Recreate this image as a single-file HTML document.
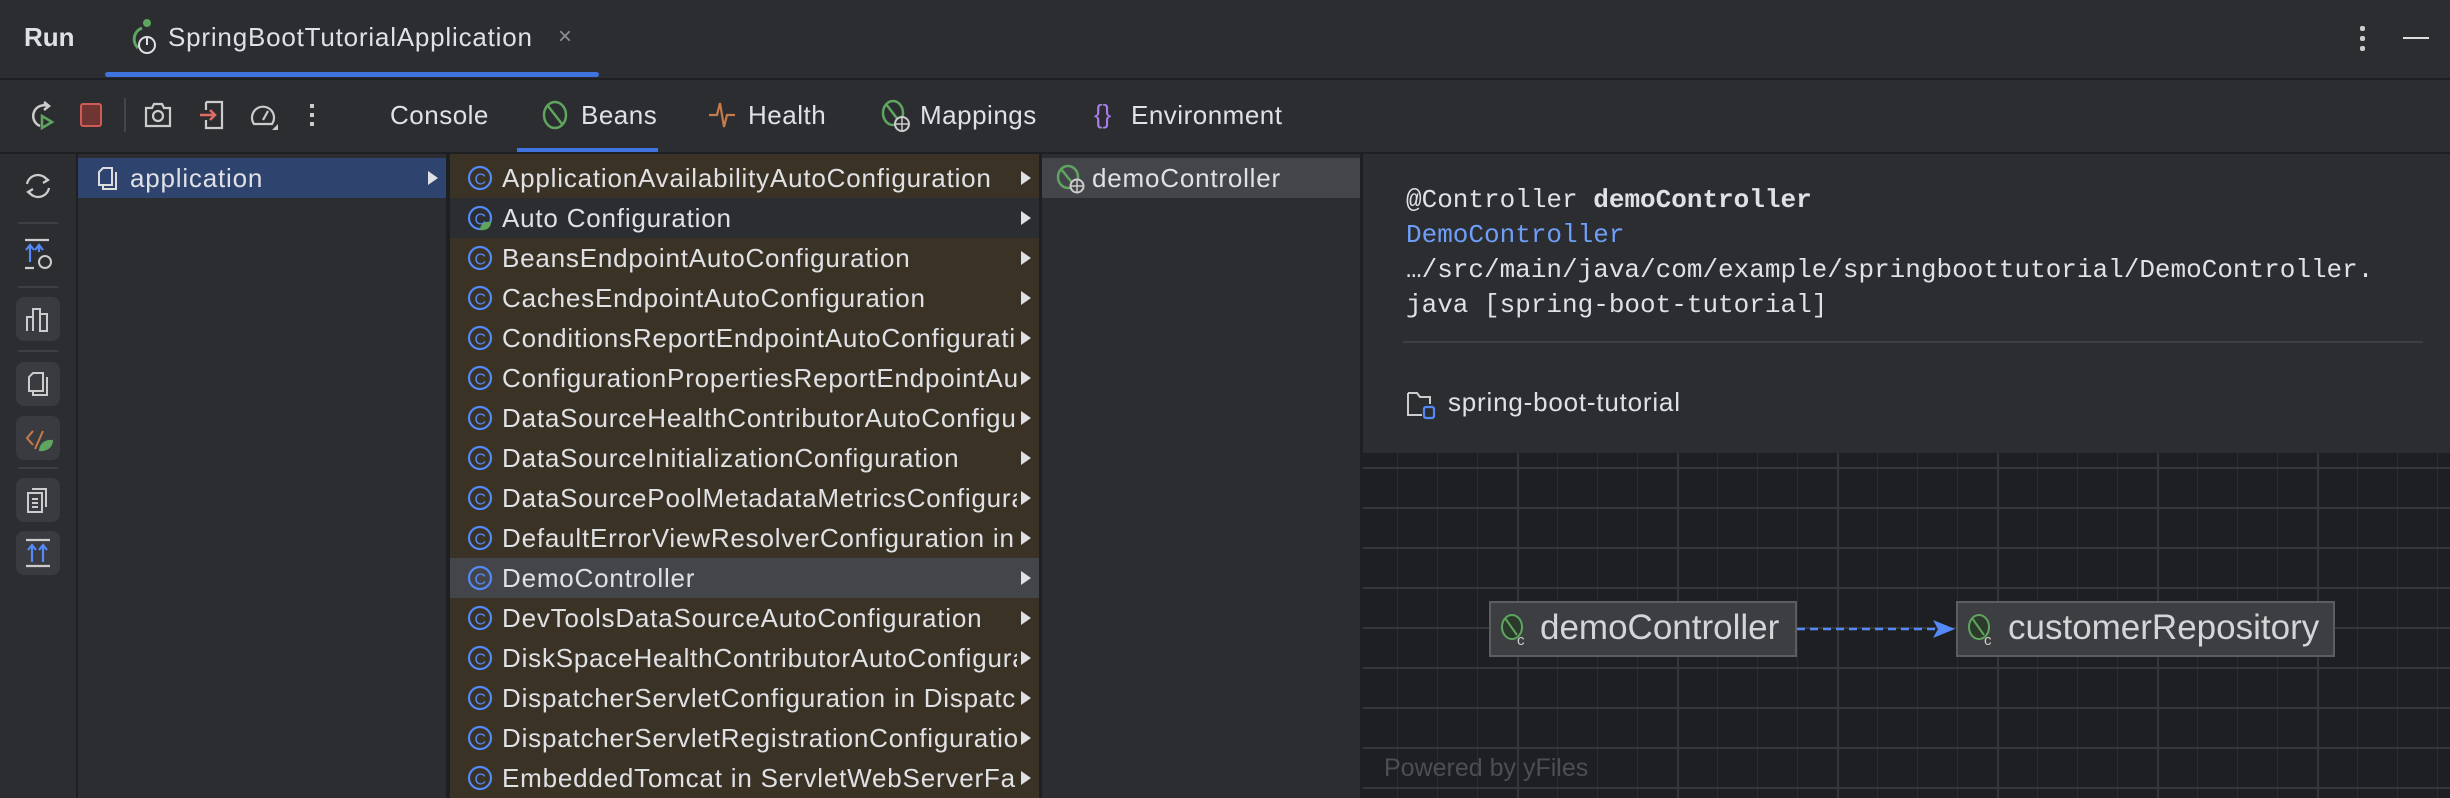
<!DOCTYPE html>
<html><head><meta charset="utf-8">
<style>
*{margin:0;padding:0;box-sizing:border-box}
body{width:2450px;height:798px;background:#2b2d30;font-family:"Liberation Sans",sans-serif;color:#dfe1e5;position:relative;overflow:hidden}
.a{position:absolute}
.t{position:absolute;white-space:nowrap}
.row{position:absolute;height:40px;left:0;right:0}
.row .lbl{position:absolute;left:52px;top:0;line-height:40px;font-size:26px;letter-spacing:0.8px;white-space:nowrap;overflow:hidden;width:515px}
.row .ic{position:absolute;left:17px;top:6px}
.row .ar{position:absolute;right:8px;top:13px;width:0;height:0;border-left:10px solid #dfe1e5;border-top:7px solid transparent;border-bottom:7px solid transparent}
.sb{position:absolute;left:16px;width:44px;height:44px;border-radius:8px;background:#393b40}
.sep{position:absolute;left:18px;width:40px;height:2px;background:#3c3f43}
.tb{font-size:26px;letter-spacing:0.5px}
</style></head><body>

<!-- header -->
<div class="t" style="left:24px;top:22px;font-size:26px;font-weight:bold">Run</div>
<svg class="a" style="left:128px;top:18px" width="36" height="38" viewBox="0 0 36 38"><circle cx="19" cy="5" r="4" fill="#5fa55f"/><path d="M14 10 A12 12 0 0 0 10 30" stroke="#5fa55f" stroke-width="3" fill="none"/><circle cx="19" cy="27" r="8" stroke="#dfe1e5" stroke-width="2" fill="#2b2d30"/><path d="M19 20 V27" stroke="#dfe1e5" stroke-width="2"/></svg>
<div class="t" style="left:168px;top:22px;font-size:26px;letter-spacing:0.8px">SpringBootTutorialApplication</div>
<div class="t" style="left:558px;top:23px;font-size:24px;color:#8c8f94">×</div>
<div class="a" style="left:105px;top:72px;width:494px;height:5px;background:#3f74e0;border-radius:3px"></div>
<div class="a" style="left:2360px;top:26px;width:5px;height:5px;background:#ccc;border-radius:2px"></div>
<div class="a" style="left:2360px;top:36px;width:5px;height:5px;background:#ccc;border-radius:2px"></div>
<div class="a" style="left:2360px;top:46px;width:5px;height:5px;background:#ccc;border-radius:2px"></div>
<div class="a" style="left:2403px;top:37px;width:26px;height:2px;background:#ddd"></div>
<div class="a" style="left:0;top:78px;width:2450px;height:2px;background:#1e1f22"></div>

<!-- toolbar -->
<svg class="a" style="left:28px;top:100px" width="28" height="30" viewBox="0 0 28 30"><path d="M20 6 A10 10 0 1 0 12 26" stroke="#ccc" stroke-width="2.5" fill="none"/><path d="M16 2 L21 6 L16 10" stroke="#ccc" stroke-width="2.5" fill="none"/><path d="M14 16 L24 22 L14 28Z" stroke="#5fa55f" stroke-width="2.5" fill="none"/></svg>
<div class="a" style="left:80px;top:103px;width:22px;height:24px;background:#6e3532;border:2px solid #d15a55;border-radius:3px"></div>
<div class="a" style="left:124px;top:98px;width:2px;height:34px;background:#43454a"></div>
<svg class="a" style="left:143px;top:102px" width="30" height="26" viewBox="0 0 30 26"><path d="M3 6 H9 L11 2 H19 L21 6 H27 V24 H3Z" stroke="#ccc" stroke-width="2.2" fill="none"/><circle cx="15" cy="14" r="5" stroke="#ccc" stroke-width="2.2" fill="none"/></svg>
<svg class="a" style="left:198px;top:100px" width="28" height="30" viewBox="0 0 28 30"><path d="M8 2 H24 V28 H8 V20 M8 10 V2" stroke="#ccc" stroke-width="2.2" fill="none"/><path d="M2 15 H17 M12 10 L17 15 L12 20" stroke="#e06c66" stroke-width="2.5" fill="none"/></svg>
<svg class="a" style="left:248px;top:100px" width="32" height="32" viewBox="0 0 32 32"><path d="M6 24 A11 11 0 1 1 24 24 Z" stroke="#ccc" stroke-width="2.2" fill="none"/><path d="M15 20 L20 11" stroke="#ccc" stroke-width="2.2"/><path d="M24 30 L30 30 L30 24Z" fill="#ccc"/></svg>
<div class="a" style="left:310px;top:104px;width:4px;height:4px;background:#ccc"></div>
<div class="a" style="left:310px;top:113px;width:4px;height:4px;background:#ccc"></div>
<div class="a" style="left:310px;top:122px;width:4px;height:4px;background:#ccc"></div>

<div class="t tb" style="left:390px;top:100px">Console</div>
<svg class="a" style="left:541px;top:100px" width="28" height="30" viewBox="0 0 28 30"><ellipse cx="14" cy="15" rx="11" ry="13" stroke="#5fa55f" stroke-width="2.5" fill="none"/><path d="M7 6 L21 24" stroke="#5fa55f" stroke-width="2.5"/></svg>
<div class="t tb" style="left:581px;top:100px">Beans</div>
<div class="a" style="left:517px;top:148px;width:141px;height:5px;background:#3f74e0"></div>
<svg class="a" style="left:708px;top:100px" width="28" height="30" viewBox="0 0 28 30"><path d="M1 15 H9 L12 3 L16 27 L19 15 H27" stroke="#c77b4a" stroke-width="2.2" fill="none"/></svg>
<div class="t tb" style="left:748px;top:100px">Health</div>
<svg class="a" style="left:880px;top:99px" width="32" height="34" viewBox="0 0 32 34"><ellipse cx="13" cy="14" rx="10" ry="12" stroke="#5fa55f" stroke-width="2.5" fill="none"/><path d="M6 5 L19 22" stroke="#5fa55f" stroke-width="2.5"/><circle cx="22" cy="25" r="7" fill="#2b2d30" stroke="#ccc" stroke-width="2"/><path d="M15 25 H29 M22 18 V32" stroke="#ccc" stroke-width="1.5"/></svg>
<div class="t tb" style="left:920px;top:100px">Mappings</div>
<div class="t" style="left:1094px;top:99px;font-size:26px;color:#a77eea">{}</div>
<div class="t tb" style="left:1131px;top:100px">Environment</div>
<div class="a" style="left:0;top:152px;width:2450px;height:2px;background:#1e1f22"></div>

<!-- sidebar -->
<div class="a" style="left:76px;top:154px;width:2px;height:644px;background:#1e1f22"></div>
<svg class="a" style="left:22px;top:170px" width="32" height="32" viewBox="0 0 32 32"><path d="M5 14 A11 11 0 0 1 25 10 M27 18 A11 11 0 0 1 7 22" stroke="#ccc" stroke-width="2.2" fill="none"/><path d="M21 6 L26 10 L21 13 M11 19 L6 22 L11 26" stroke="#ccc" stroke-width="2.2" fill="none"/></svg>
<div class="sep" style="top:222px"></div>
<svg class="a" style="left:22px;top:238px" width="32" height="32" viewBox="0 0 32 32"><path d="M3 2 H27 M3 30 H12" stroke="#ccc" stroke-width="2.2"/><path d="M8 24 V8 M4 12 L8 7 L12 12 M17 14 V8 M13 12 L17 7 L21 12" stroke="#548af7" stroke-width="2.2" fill="none"/><circle cx="23" cy="24" r="6" stroke="#ccc" stroke-width="2" fill="none"/></svg>
<div class="sep" style="top:286px"></div>
<div class="sb" style="top:297px"></div>
<svg class="a" style="left:24px;top:305px" width="28" height="28" viewBox="0 0 28 28"><path d="M3 26 V12 H9 V26 M9 26 V4 H16 V26 M16 26 V9 H23 V26 Z" stroke="#ccc" stroke-width="2" fill="none"/></svg>
<div class="sep" style="top:350px"></div>
<div class="sb" style="top:362px"></div>
<svg class="a" style="left:25px;top:369px" width="28" height="30" viewBox="0 0 28 30"><path d="M8 4 H18 V22 H4 V8Z M8 22 V26 H22 V8" stroke="#ccc" stroke-width="2" fill="none"/></svg>
<div class="sb" style="top:416px"></div>
<svg class="a" style="left:24px;top:423px" width="32" height="32" viewBox="0 0 32 32"><path d="M9 8 L3 15 L9 22 M19 8 L11 26" stroke="#c77b4a" stroke-width="2" fill="none"/><path d="M15 28 C15 20 22 16 29 17 C29 25 22 29 15 28Z" fill="#5fa55f"/></svg>
<div class="sep" style="top:467px"></div>
<div class="sb" style="top:478px"></div>
<svg class="a" style="left:24px;top:485px" width="28" height="30" viewBox="0 0 28 30"><path d="M8 4 H22 V22 M4 8 H18 V27 H4 Z M8 14 H14 M8 18 H14 M8 22 H14" stroke="#ccc" stroke-width="2" fill="none"/></svg>
<div class="sb" style="top:531px"></div>
<svg class="a" style="left:24px;top:538px" width="28" height="30" viewBox="0 0 28 30"><path d="M2 2 H26 M2 28 H26" stroke="#ccc" stroke-width="2.2"/><path d="M8 24 V8 M4 12 L8 7 L12 12 M19 24 V8 M15 12 L19 7 L23 12" stroke="#548af7" stroke-width="2.2" fill="none"/></svg>

<!-- col1 -->
<div class="a" style="left:78px;top:154px;width:368px;height:644px;background:#2b2d30">
  <div class="row" style="top:4px;background:#2e436e">
    <svg class="ic" style="left:18px;top:8px" width="24" height="26" viewBox="0 0 24 26"><path d="M7 2 H16 V19 H3 V6Z M7 19 V23 H20 V6" stroke="#ddd" stroke-width="2" fill="none"/></svg>
    <div class="lbl" style="left:52px">application</div>
    <div class="ar"></div>
  </div>
</div>
<div class="a" style="left:446px;top:154px;width:4px;height:644px;background:#1e1f22"></div>

<!-- col2 -->
<div class="a" id="c2" style="left:450px;top:154px;width:589px;height:644px;background:#3b3226;overflow:hidden">
</div>
<div class="a" style="left:1039px;top:154px;width:3px;height:644px;background:#1e1f22"></div>

<!-- col3 -->
<div class="a" style="left:1042px;top:154px;width:318px;height:644px;background:#2b2d30">
  <div class="row" style="top:4px;background:#43454a">
    <svg class="ic" style="left:14px;top:6px" width="30" height="30" viewBox="0 0 30 30"><ellipse cx="12" cy="13" rx="10" ry="11" stroke="#5fa55f" stroke-width="2.5" fill="none"/><path d="M5 5 L18 21" stroke="#5fa55f" stroke-width="2.5"/><circle cx="21" cy="22" r="6.5" fill="#43454a" stroke="#ccc" stroke-width="2"/><path d="M14.5 22 H27.5 M21 15.5 V28.5" stroke="#ccc" stroke-width="1.5"/></svg>
    <div class="lbl" style="left:50px">demoController</div>
  </div>
</div>
<div class="a" style="left:1360px;top:154px;width:3px;height:644px;background:#1e1f22"></div>

<!-- info panel -->
<div class="t" style="left:1406px;top:183px;font-family:'Liberation Mono',monospace;font-size:26px;line-height:35px">@Controller <b>demoController</b><br><span style="color:#6f9ef8">DemoController</span><br>…/src/main/java/com/example/springboottutorial/DemoController.<br>java [spring-boot-tutorial]</div>
<div class="a" style="left:1403px;top:341px;width:1020px;height:2px;background:#3c3f43"></div>
<svg class="a" style="left:1406px;top:390px" width="32" height="30" viewBox="0 0 32 30"><path d="M2 3 H11 L14 7 H24 V14 M2 3 V25 H16" stroke="#ccc" stroke-width="2" fill="none"/><rect x="18" y="17" width="10" height="11" rx="2" stroke="#548af7" stroke-width="2.2" fill="none"/></svg>
<div class="t" style="left:1448px;top:387px;font-size:26px;letter-spacing:0.8px">spring-boot-tutorial</div>

<!-- graph -->
<div class="a" style="left:1363px;top:453px;width:1087px;height:345px;background-color:#1e1f22;
background-image:linear-gradient(#34363a 2px,transparent 2px),linear-gradient(90deg,#34363a 2px,transparent 2px),linear-gradient(90deg,#2a2c30 1px,transparent 1px);
background-size:40px 40px,160px 160px,40px 40px;background-position:0 14px,154px 0,34px 0"></div>
<div class="a" style="left:1489px;top:601px;width:308px;height:56px;background:#3d3e41;border:2px solid #5c5d60"></div>
<svg class="a" style="left:1500px;top:613px" width="32" height="34" viewBox="0 0 32 34"><ellipse cx="12" cy="14" rx="10" ry="12" stroke="#5fa55f" stroke-width="2" fill="#2c3a2c"/><path d="M5 5 L17 22" stroke="#5fa55f" stroke-width="2"/><text x="17" y="32" font-family="Liberation Sans" font-size="15" fill="#ccc">c</text></svg>
<div class="t" style="left:1540px;top:608px;font-size:35px;color:#d4d5d8">demoController</div>
<svg class="a" style="left:1797px;top:618px" width="160" height="22" viewBox="0 0 160 22"><path d="M0 11 H140" stroke="#548af7" stroke-width="2.5" stroke-dasharray="8 5"/><path d="M136 2 L158 11 L136 20 L141 11Z" fill="#548af7"/></svg>
<div class="a" style="left:1956px;top:601px;width:379px;height:56px;background:#3d3e41;border:2px solid #5c5d60"></div>
<svg class="a" style="left:1967px;top:613px" width="32" height="34" viewBox="0 0 32 34"><ellipse cx="12" cy="14" rx="10" ry="12" stroke="#5fa55f" stroke-width="2" fill="#2c3a2c"/><path d="M5 5 L17 22" stroke="#5fa55f" stroke-width="2"/><text x="17" y="32" font-family="Liberation Sans" font-size="15" fill="#ccc">c</text></svg>
<div class="t" style="left:2008px;top:608px;font-size:35px;color:#d4d5d8">customerRepository</div>
<div class="t" style="left:1384px;top:754px;font-size:25px;color:#4c4e52">Powered by yFiles</div>

<script>
var items=["ApplicationAvailabilityAutoConfiguration","Auto Configuration","BeansEndpointAutoConfiguration","CachesEndpointAutoConfiguration","ConditionsReportEndpointAutoConfiguration","ConfigurationPropertiesReportEndpointAutoConfiguration","DataSourceHealthContributorAutoConfiguration","DataSourceInitializationConfiguration","DataSourcePoolMetadataMetricsConfiguration","DefaultErrorViewResolverConfiguration in ErrorMvc","DemoController","DevToolsDataSourceAutoConfiguration","DiskSpaceHealthContributorAutoConfiguration","DispatcherServletConfiguration in DispatcherServlet","DispatcherServletRegistrationConfiguration","EmbeddedTomcat in ServletWebServerFactory"];
var h="";
items.forEach(function(s,i){
 var bg=i==1?"#2b2d30":(i==10?"#43454a":"transparent");
 var leaf=i==1?'<path d="M13 26 C13 20 18 17 24 18 C24 24 19 27 13 26Z" fill="#5fa55f"/>':'';
 h+='<div class="row" style="top:'+(4+i*40)+'px;background:'+bg+'"><svg class="ic" width="28" height="28" viewBox="0 0 28 28"><circle cx="13" cy="14" r="11" stroke="#548af7" stroke-width="2.2" fill="none"/><text x="7.5" y="20.5" font-family="Liberation Sans" font-size="16" fill="#548af7">C</text>'+leaf+'</svg><div class="lbl">'+s+'</div><div class="ar"></div></div>';
});
document.getElementById("c2").innerHTML=h;
</script>
</body></html>
